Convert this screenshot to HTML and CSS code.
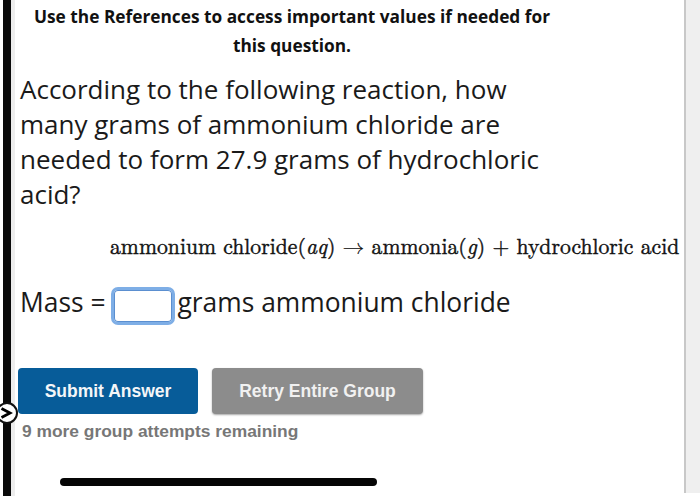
FILE: index.html
```html
<!DOCTYPE html>
<html>
<head>
<meta charset="utf-8">
<link rel="stylesheet" href="styles.css">
</head>
<body>
<div class="screen">
  <div class="edge"><div class="edge-bar"></div><div class="edge-shade"></div></div>
  <main class="content">
    <p class="refs">Use the References to access important values if needed for this question.</p>
    <p class="question">According to the following reaction, how many grams of ammonium chloride are needed to form 27.9 grams of hydrochloric acid?</p>
    <div class="equation">ammonium chloride(<i>aq</i>) <span class="arrow">&rarr;</span> ammonia(<i>g</i>) + hydrochloric acid</div>
    <div class="answer">
      <span class="label">Mass =</span>
      <span class="input"></span>
      <span class="unit">grams ammonium chloride</span>
    </div>
    <div class="buttons">
      <button class="btn btn-submit">Submit Answer</button>
      <button class="btn btn-retry">Retry Entire Group</button>
    </div>
    <p class="attempts">9 more group attempts remaining</p>
    <div class="home"><div class="home-bar"></div></div>
  </main>
  <div class="side"></div>
  <svg class="toggle" width="24" height="24" viewBox="0 0 24 24">
    <circle cx="12" cy="12" r="10" fill="#fff" stroke="#111" stroke-width="2"/>
    <path d="M6.5 7.5 L15 12 L6.5 16.5" fill="none" stroke="#000" stroke-width="2.8" stroke-linejoin="miter"/>
  </svg>
</div>
</body>
</html>
```
FILE: styles.css
```css
html, body {
  margin: 0;
  padding: 0;
  background: #ffffff;
}
.screen {
  position: relative;
  width: 700px;
  height: 496px;
  display: flex;
  overflow: hidden;
}
.edge {
  display: flex;
  flex: 0 0 15px;
  padding-left: 3px;
  box-sizing: border-box;
}
.edge-bar {
  width: 8px;
  background: #0a0a0a;
}
.edge-shade {
  width: 4px;
  background: #ededed;
}
.content {
  flex: 1;
  min-width: 0;
  overflow: hidden;
  padding-left: 5px;
  display: flex;
  flex-direction: column;
}
.refs {
  margin: 2px 0 0 0;
  width: 544px;
  text-align: center;
  font-family: "Open Sans", sans-serif;
  font-weight: 700;
  font-size: 17.3px;
  line-height: 29px;
  color: #111;
}
.question {
  margin: 12px 0 0 0;
  width: 555px;
  font-family: "Open Sans", sans-serif;
  font-size: 26px;
  line-height: 35px;
  color: #1a1a1a;
}
.equation {
  margin: 18px 0 0 90px;
  white-space: nowrap;
  font-family: "Latin Modern Roman", "DejaVu Serif", "Liberation Serif", serif;
  font-size: 21.7px;
  color: #111;
  -webkit-text-stroke: 0.4px #111;
}
.equation .arrow {
  font-family: "Latin Modern Math", "Latin Modern Roman", "DejaVu Serif", serif;
  -webkit-text-stroke: 0.2px #111;
}
.answer {
  margin-top: 18px;
  display: flex;
  align-items: center;
  font-family: "Open Sans", sans-serif;
  font-size: 26.4px;
  color: #1a1a1a;
}
.input {
  width: 58px;
  height: 32px;
  margin: 9px 3px 0 5px;
  border: 3px solid #7eaee6;
  border-radius: 7px;
  box-shadow: inset 0 0 0 1px #5b8fd0;
  background: #fff;
}
.buttons {
  margin-top: 43px;
  display: flex;
  gap: 14px;
  margin-left: -2px;
}
.btn {
  height: 46px;
  border: none;
  border-radius: 4px;
  font-family: "Liberation Sans", Arial, sans-serif;
  font-weight: 700;
  font-size: 17.5px;
  padding: 0;
}
.btn-submit {
  width: 180px;
  background: #075c99;
  color: #f4f6f8;
}
.btn-retry {
  width: 211px;
  background: #8c8c8c;
  color: #f1f1f1;
  box-shadow: 0 1px 2px rgba(0,0,0,0.35);
}
.attempts {
  margin: 7px 0 0 2px;
  font-family: "Liberation Sans", Arial, sans-serif;
  font-weight: 700;
  font-size: 17.4px;
  color: #777;
}
.home {
  margin-top: 36px;
  padding-left: 40px;
}
.home-bar {
  width: 317px;
  height: 8px;
  border-radius: 4px;
  background: #050505;
}
.side {
  flex: 0 0 14px;
  background: #efefef;
  border-left: 2px solid #c8c8c8;
  margin-bottom: 3px;
}
.toggle {
  position: absolute;
  left: -5px;
  top: 401px;
}
```
